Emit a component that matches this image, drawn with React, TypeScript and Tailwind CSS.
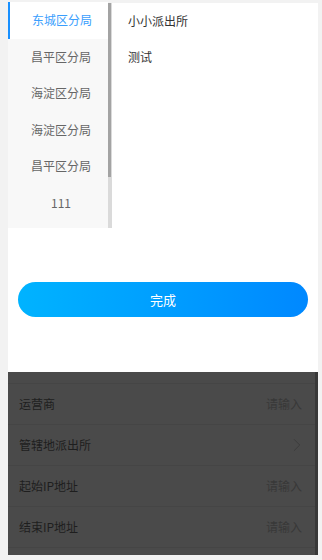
import { ChevronRight } from "lucide-react";

const branches = ["东城区分局", "昌平区分局", "海淀区分局", "海淀区分局", "昌平区分局", "111"];
const stations = ["小小派出所", "测试"];

const rows = [
  { label: "运营商", value: "请输入" },
  { label: "管辖地派出所", arrow: true },
  { label: "起始IP地址", value: "请输入" },
  { label: "结束IP地址", value: "请输入" },
];

export default function App() {
  return (
    <div
      className="w-[322px] h-[560px] bg-[#f2f2f2] pt-[3px] pl-2 pr-1 overflow-hidden"
      style={{ fontFamily: '"Noto Sans CJK SC", "Noto Sans", sans-serif' }}
    >
      <div className="h-[552px] bg-white flex flex-col">
        <div className="flex h-[225px]">
          <div className="w-[100px] bg-[#f8f8f8] flex flex-col -mt-[1px]">
            {branches.map((b, i) => (
              <div
                key={i}
                className={`h-[36.5px] flex items-center justify-center text-[12px] pl-[6px] ${
                  i === 0
                    ? "bg-white text-[#3a9efd] border-l-2 border-[#1890ff]"
                    : "text-[#666]"
                }`}
              >
                {b}
              </div>
            ))}
          </div>
          <div className="w-[4px] bg-[#dadada] flex flex-col">
            <div className="h-[174px] w-[3px] bg-[#a3a3a3]" />
          </div>
          <div className="flex-1 flex flex-col pl-[16px]">
            {stations.map((s) => (
              <div key={s} className="h-[36px] flex items-center text-[12px] text-[#333]">
                {s}
              </div>
            ))}
          </div>
        </div>

        <div className="px-[10px] pt-[54px]">
          <button className="w-full h-[35px] rounded-full bg-gradient-to-r from-[#00b3ff] to-[#0088ff] text-white text-[13px]">
            完成
          </button>
        </div>

        <div className="mt-[55px] flex-1 flex bg-[#4a4a4a]">
          <div className="flex-1 flex flex-col">
            <div className="h-[12px] border-b border-[#454545]" />
            {rows.map((r) => (
              <div
                key={r.label}
                className="h-[41px] flex items-center justify-between pl-[11px] pr-[13px] border-b border-[#454545] text-[12px]"
              >
                <span className="text-[#1e1e1e]">{r.label}</span>
                {r.arrow ? (
                  <ChevronRight size={22} strokeWidth={1} className="text-[#3a3a3a] -mr-[6px]" />
                ) : (
                  <span className="text-[#383838]">{r.value}</span>
                )}
              </div>
            ))}
          </div>
          <div className="w-[3px] bg-[#383838]" />
        </div>
      </div>
    </div>
  );
}
